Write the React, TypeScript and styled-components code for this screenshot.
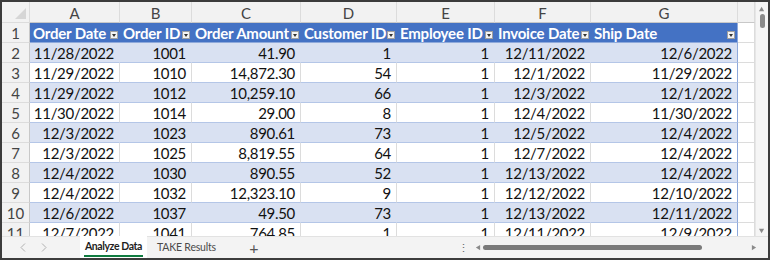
import React from "react";
import styled, { createGlobalStyle, css } from "styled-components";

const Global = createGlobalStyle`
  html, body { margin: 0; padding: 0; background: #ffffff; }
  * { box-sizing: border-box; }
`;

const Frame = styled.div`
  width: 770px;
  height: 260px;
  border: 2px solid #3c3c3c;
  display: flex;
  flex-direction: column;
  background: #ffffff;
  overflow: hidden;
`;

const Body = styled.div`
  flex: 0 0 234px;
  display: flex;
  overflow: hidden;
`;

const Sheet = styled.div`
  flex: 1;
  display: grid;
  grid-template-columns: 28px 90px 72px 109px 96px 98px 96px 147px 1fr;
  grid-template-rows: 21px;
  grid-auto-rows: 20px;
  font-family: Lato, "Open Sans", sans-serif;
  font-size: 15px;
  color: #111;
  align-content: start;
`;

const gridLine = "#dcdcdc";

const Corner = styled.div`
  background: #f2f2f2;
  border-right: 1px solid ${gridLine};
  border-bottom: 1px solid ${gridLine};
  display: flex;
  align-items: flex-end;
  justify-content: flex-end;
  padding: 0 3px 3px 0;
`;

const ColHead = styled.div`
  background: #f2f2f2;
  border-right: 1px solid ${gridLine};
  border-bottom: 1px solid #c8c8c8;
  display: flex;
  align-items: center;
  justify-content: center;
  color: #444;
  font-size: 15px;
  padding-top: 1px;
`;

const RowHead = styled.div`
  background: #f2f2f2;
  border-right: 1px solid #c8c8c8;
  border-bottom: 1px solid ${gridLine};
  display: flex;
  align-items: center;
  justify-content: center;
  color: #444;
  font-size: 15px;
`;

const HeadCell = styled.div<{ $last?: boolean }>`
  background: #4472c4;
  color: #ffffff;
  font-weight: 700;
  display: flex;
  align-items: center;
  justify-content: space-between;
  padding: 0 2px 0 3px;
  white-space: nowrap;
  overflow: hidden;
  border-bottom: 1px solid #8ea9db;
  ${(p) => p.$last && css`border-right: 1px solid #8ea9db;`}
`;

const HeadLabel = styled.span`
  letter-spacing: -0.2px;
`;

const FilterBtn = styled.span`
  width: 8px;
  height: 8px;
  margin-top: 5px;
  background: #f4f4f4;
  border: 1px solid #a0a0a0;
  display: flex;
  align-items: center;
  justify-content: center;
  flex: none;
`;

const DataCell = styled.div<{ $band: boolean; $last?: boolean }>`
  background: ${(p) => (p.$band ? "#d9e1f2" : "#ffffff")};
  border-bottom: 1px solid #b4c6e7;
  border-right: 1px solid ${(p) => (p.$last ? "#8ea9db" : p.$band ? "#d9e1f2" : gridLine)};
  display: flex;
  align-items: center;
  justify-content: flex-end;
  padding: 1px 5px 0 0;
  white-space: nowrap;
  letter-spacing: -0.3px;
`;

const EmptyCell = styled.div`
  border-right: 1px solid ${gridLine};
  border-bottom: 1px solid ${gridLine};
`;

const VScroll = styled.div`
  width: 13px;
  background: #f5f5f5;
  border-left: 1px solid #e6e6e6;
  display: flex;
  flex-direction: column;
  align-items: center;
  padding: 4px 0 2px;
`;

const VThumb = styled.div`
  width: 5px;
  height: 14px;
  border-radius: 3px;
  background: #8a8a8a;
  margin-top: 2px;
`;

const Spacer = styled.div`
  flex: 1;
`;

const TabBar = styled.div`
  flex: 1;
  display: flex;
  align-items: stretch;
  background: #f3f3f3;
  border-top: 1px solid #e2e2e2;
  font-family: Lato, "Open Sans", sans-serif;
  font-size: 10.5px;
  color: #444;
`;

const NavGroup = styled.div`
  display: flex;
  width: 78px;
  padding-left: 10px;
`;

const NavArrow = styled.span`
  width: 21px;
  display: flex;
  align-items: center;
  justify-content: center;
`;

const Tab = styled.div<{ $active?: boolean; $w: number }>`
  display: flex;
  align-items: center;
  justify-content: center;
  width: ${(p) => p.$w}px;
  margin-top: -1px;
  white-space: nowrap;
  ${(p) =>
    p.$active
      ? css`
          background: #ffffff;
          color: #1e1e1e;
          font-weight: 700;
          letter-spacing: -0.4px;
        `
      : css`
          color: #4a4a4a;
          letter-spacing: -0.2px;
        `}
`;

const TabText = styled.span<{ $active?: boolean }>`
  padding: 2px 1px 2px;
  line-height: 13px;
  ${(p) => p.$active && css`border-bottom: 2px solid #107c41;`}
`;

const AddTab = styled.span`
  width: 56px;
  display: flex;
  align-items: center;
  justify-content: center;
  font-size: 16px;
  color: #555;
  padding-bottom: 1px;
`;

const Dots = styled.span`
  display: flex;
  align-items: center;
  justify-content: center;
  margin-left: 176px;
  width: 10px;
  color: #666;
  font-size: 11px;
`;

const HScroll = styled.div`
  flex: 1;
  display: flex;
  align-items: center;
  padding: 0 11px 0 7px;
  gap: 2px;
`;

const HThumb = styled.div`
  width: 219px;
  height: 5px;
  border-radius: 3px;
  background: #7a7a7a;
`;

const Tri = ({ dir }: { dir: "up" | "down" | "left" | "right" }) => {
  const pts = {
    up: "0,6 3,1 6,6",
    down: "0,1 6,1 3,6",
    left: "6,0 6,6 1,3",
    right: "1,0 1,6 6,3",
  }[dir];
  return (
    <svg width="6" height="6" viewBox="0 0 7 7">
      <polygon points={pts} fill="#8a8a8a" />
    </svg>
  );
};

const Chevron = ({ dir }: { dir: "left" | "right" }) => (
  <svg width="6" height="9" viewBox="0 0 6 9">
    <polyline
      points={dir === "left" ? "5,0.5 1,4.5 5,8.5" : "1,0.5 5,4.5 1,8.5"}
      fill="none"
      stroke="#b0b0b0"
      strokeWidth="1"
    />
  </svg>
);

const headers = [
  "Order Date",
  "Order ID",
  "Order Amount",
  "Customer ID",
  "Employee ID",
  "Invoice Date",
  "Ship Date",
];

const rows = [
  ["11/28/2022", "1001", "41.90", "1", "1", "12/11/2022", "12/6/2022"],
  ["11/29/2022", "1010", "14,872.30", "54", "1", "12/1/2022", "11/29/2022"],
  ["11/29/2022", "1012", "10,259.10", "66", "1", "12/3/2022", "12/1/2022"],
  ["11/30/2022", "1014", "29.00", "8", "1", "12/4/2022", "11/30/2022"],
  ["12/3/2022", "1023", "890.61", "73", "1", "12/5/2022", "12/4/2022"],
  ["12/3/2022", "1025", "8,819.55", "64", "1", "12/7/2022", "12/4/2022"],
  ["12/4/2022", "1030", "890.55", "52", "1", "12/13/2022", "12/4/2022"],
  ["12/4/2022", "1032", "12,323.10", "9", "1", "12/12/2022", "12/10/2022"],
  ["12/6/2022", "1037", "49.50", "73", "1", "12/13/2022", "12/11/2022"],
  ["12/7/2022", "1041", "764.85", "1", "1", "12/11/2022", "12/9/2022"],
];

const letters = ["A", "B", "C", "D", "E", "F", "G", ""];

export default function App() {
  return (
    <>
      <Global />
      <Frame>
        <Body>
          <Sheet>
            <Corner>
              <svg width="11" height="11" viewBox="0 0 11 11">
                <polygon points="11,0 11,11 0,11" fill="#d6d6d6" />
              </svg>
            </Corner>
            {letters.map((l, i) => (
              <ColHead key={"c" + i}>{l}</ColHead>
            ))}
            <RowHead>1</RowHead>
            {headers.map((h, i) => (
              <HeadCell key={h} $last={i === headers.length - 1}>
                <HeadLabel>{h}</HeadLabel>
                <FilterBtn>
                  <svg width="4" height="3" viewBox="0 0 4 3">
                    <polygon points="0,0 4,0 2,3" fill="#333" />
                  </svg>
                </FilterBtn>
              </HeadCell>
            ))}
            <EmptyCell />
            {rows.map((r, ri) => (
              <React.Fragment key={ri}>
                <RowHead>{ri + 2}</RowHead>
                {r.map((v, ci) => (
                  <DataCell key={ci} $band={ri % 2 === 0} $last={ci === r.length - 1}>
                    {v}
                  </DataCell>
                ))}
                <EmptyCell />
              </React.Fragment>
            ))}
          </Sheet>
          <VScroll>
            <Tri dir="up" />
            <VThumb />
            <Spacer />
            <Tri dir="down" />
          </VScroll>
        </Body>
        <TabBar>
          <NavGroup>
            <NavArrow>
              <Chevron dir="left" />
            </NavArrow>
            <NavArrow>
              <Chevron dir="right" />
            </NavArrow>
          </NavGroup>
          <Tab $active $w={67}>
            <TabText $active>Analyze Data</TabText>
          </Tab>
          <Tab $w={79}>
            <TabText>TAKE Results</TabText>
          </Tab>
          <AddTab>+</AddTab>
          <Dots>⋮</Dots>
          <HScroll>
            <Tri dir="left" />
            <HThumb />
            <Spacer />
            <Tri dir="right" />
          </HScroll>
        </TabBar>
      </Frame>
    </>
  );
}
